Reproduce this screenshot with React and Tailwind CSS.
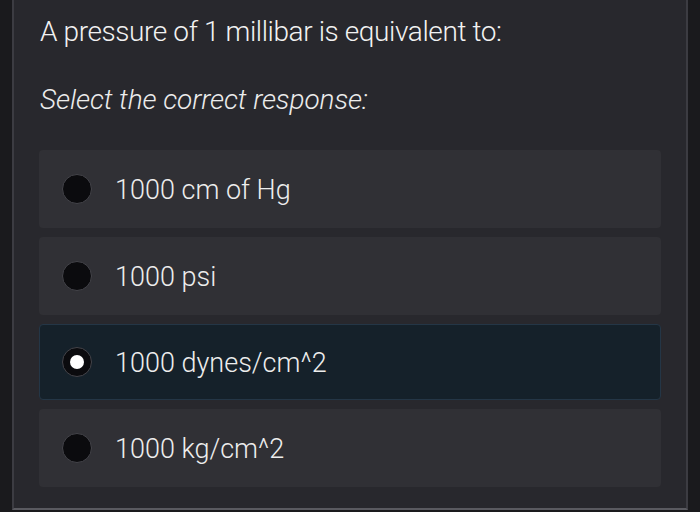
import React from 'react';

const options = [
    { label: '1000 cm of Hg', selected: false },
    { label: '1000 psi', selected: false },
    { label: '1000 dynes/cm^2', selected: true },
    { label: '1000 kg/cm^2', selected: false },
];

const Radio = ({ checked }) => (
    <div className="w-[30px] h-[30px] rounded-full bg-[#0b0b0e] border border-[#44444a] flex items-center justify-center flex-shrink-0">
        {checked && <div className="w-[14px] h-[14px] rounded-full bg-white" />}
    </div>
);

export default function App() {
    return (
        <div className="w-[700px] h-[512px] bg-[#1a1a1d] flex font-['Roboto',sans-serif] overflow-hidden">
            <div className="ml-[12px] w-[676px] h-[510px] bg-[#28282d] border-x-2 border-[#3c3c42] border-b-2 border-b-[#5a5a60] pt-[14px]">
                <h1 className="pl-[26px] text-[28px] font-light text-[#f2f2f2] tracking-[-0.4px] leading-[36px]">
                    A pressure of 1 millibar is equivalent to:
                </h1>
                <p className="pl-[26px] mt-[32px] text-[28px] font-light italic text-[#ececec] tracking-[-0.1px] leading-[36px]">
                    Select the correct response:
                </p>
                <div className="mt-[32px] mx-[25px] flex flex-col gap-[9px]">
                    {options.map((o) => (
                        <div
                            key={o.label}
                            className={
                                o.selected
                                    ? 'h-[76px] rounded-[4px] bg-[#15212a] border border-[#243646] flex items-center pl-[22px] gap-[23px]'
                                    : 'h-[78px] rounded-[4px] bg-[#303035] flex items-center pl-[23px] gap-[23px]'
                            }
                        >
                            <Radio checked={o.selected} />
                            <span className="text-[27px] font-light text-[#ededed] pt-[3px]">{o.label}</span>
                        </div>
                    ))}
                </div>
            </div>
        </div>
    );
}
